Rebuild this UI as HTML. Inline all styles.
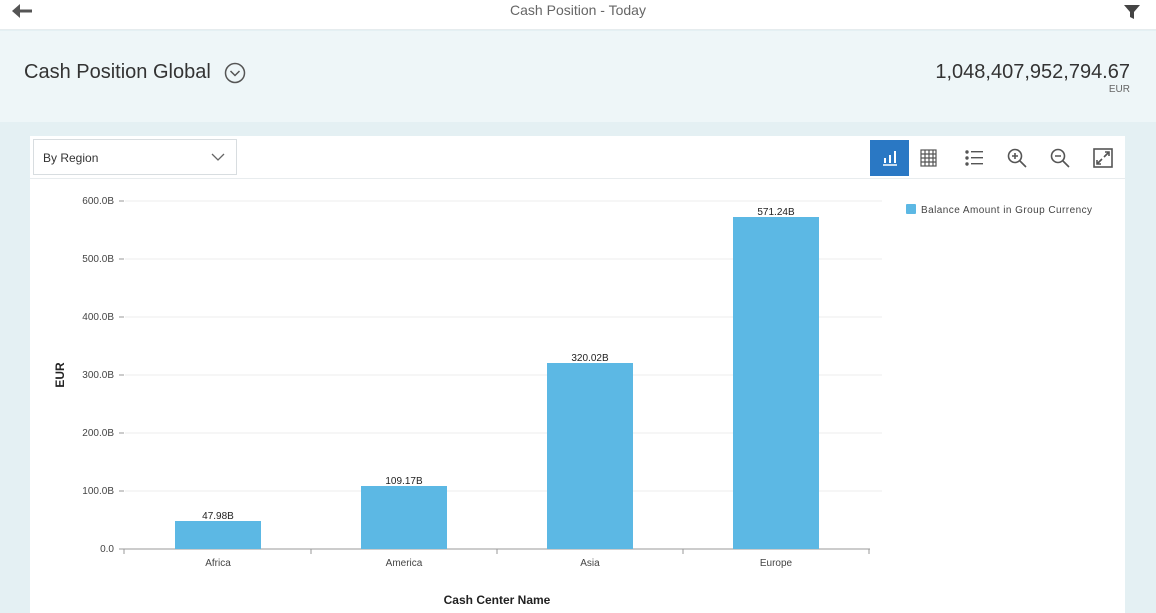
<!DOCTYPE html><html><head><style>
*{margin:0;padding:0;box-sizing:border-box}
body{width:1156px;height:613px;overflow:hidden;font-family:"Liberation Sans",sans-serif;background:#e4f0f3;position:relative}
.a{position:absolute}
</style></head><body>
<div class="a" style="left:0;top:0;width:1156px;height:30px;background:#fff;border-bottom:1px solid #e6ecee"></div>
<svg class="a" style="left:11px;top:3px" width="24" height="16"><path d="M4 8H21" stroke="#555" stroke-width="3" fill="none"/><path d="M1 8L9 1V15Z" fill="#555"/></svg>
<div class="a" style="left:0;width:1156px;top:2px;text-align:center;font-size:14px;color:#666">Cash Position - Today</div>
<svg class="a" style="left:1123px;top:4px" width="18" height="16"><path d="M1 1H17L11 8V15L7 13V8Z" fill="#444"/></svg>
<div class="a" style="left:0;top:31px;width:1156px;height:91px;background:#eef6f8"></div>
<div class="a" style="left:24px;top:61px;font-size:20px;color:#333">Cash Position Global</div>
<svg class="a" style="left:224px;top:62px" width="22" height="22"><circle cx="11" cy="11" r="9.5" stroke="#555" stroke-width="1.5" fill="none"/><path d="M6.5 9L11 13.5L15.5 9" stroke="#555" stroke-width="1.5" fill="none"/></svg>
<div class="a" style="right:26px;top:61px;font-size:20px;color:#333">1,048,407,952,794.67</div>
<div class="a" style="right:26px;top:84px;font-size:10px;color:#666">EUR</div>
<div class="a" style="left:30px;top:136px;width:1095px;height:477px;background:#fff"></div>
<div class="a" style="left:33px;top:139px;width:204px;height:36px;border:1px solid #d8dde0;background:#fff"></div>
<div class="a" style="left:43px;top:151px;font-size:12px;color:#333">By Region</div>
<svg class="a" style="left:210px;top:152px" width="16" height="10"><path d="M2 2L8 8L14 2" stroke="#666" stroke-width="1.3" fill="none"/></svg>
<div class="a" style="left:30px;top:178px;width:1095px;height:1px;background:#e8ecee"></div>
<div class="a" style="left:870px;top:140px;width:39px;height:36px;background:#2a78c4"></div>
<svg class="a" style="left:880px;top:148px" width="20" height="20"><path d="M3 17H17" stroke="#fff" stroke-width="1.5"/><rect x="4" y="10" width="2" height="5" fill="#fff"/><rect x="9" y="7" width="2" height="8" fill="#fff"/><rect x="14" y="3" width="2" height="12" fill="#fff"/></svg>
<svg class="a" style="left:918px;top:148px" width="20" height="20" stroke="#555" stroke-width="1.2" fill="none"><rect x="3" y="2" width="15" height="16"/><path d="M3 6H18M3 10H18M3 14H18M7 2V18M11 2V18M15 2V18"/></svg>
<svg class="a" style="left:963px;top:148px" width="22" height="20" fill="#555"><circle cx="4" cy="4" r="1.7"/><circle cx="4" cy="10" r="1.7"/><circle cx="4" cy="16" r="1.7"/><rect x="8" y="3" width="12" height="1.4"/><rect x="8" y="9" width="12" height="1.4"/><rect x="8" y="15" width="12" height="1.4"/></svg>
<svg class="a" style="left:1006px;top:147px" width="22" height="22" stroke="#555" stroke-width="1.6" fill="none"><circle cx="9" cy="9" r="6.5"/><path d="M14 14L20 20M6 9H12M9 6V12"/></svg>
<svg class="a" style="left:1049px;top:147px" width="22" height="22" stroke="#555" stroke-width="1.6" fill="none"><circle cx="9" cy="9" r="6.5"/><path d="M14 14L20 20M6 9H12"/></svg>
<svg class="a" style="left:1093px;top:148px" width="20" height="20" stroke="#555" stroke-width="1.6" fill="none"><rect x="1" y="1" width="18" height="18"/><path d="M9 11L4 16M4 12V16H8M11 9L16 4M12 4H16V8"/></svg>
<svg class="a" style="left:0;top:0" width="1156" height="613" font-family="Liberation Sans,sans-serif">
<g stroke="#eee" stroke-width="1"><path d="M125 201H882M125 259H882M125 317H882M125 375H882M125 433H882M125 491H882"/></g>
<g font-size="10" fill="#444" text-anchor="end"><text x="114" y="204">600.0B</text><text x="114" y="262">500.0B</text><text x="114" y="320">400.0B</text><text x="114" y="378">300.0B</text><text x="114" y="436">200.0B</text><text x="114" y="494">100.0B</text><text x="114" y="552">0.0</text></g>
<g stroke="#999"><path d="M119 201H124M119 259H124M119 317H124M119 375H124M119 433H124M119 491H124M119 549H124"/><path d="M124 549H870M311 549V554M497 549V554M683 549V554M869 549V554M124 549V554"/></g>
<g fill="#5cb8e4"><rect x="175" y="521" width="86" height="28"/><rect x="361" y="486" width="86" height="63"/><rect x="547" y="363" width="86" height="186"/><rect x="733" y="217" width="86" height="332"/></g>
<g font-size="10" fill="#222" text-anchor="middle"><text x="218" y="519">47.98B</text><text x="404" y="484">109.17B</text><text x="590" y="361">320.02B</text><text x="776" y="215">571.24B</text></g>
<g font-size="10" fill="#444" text-anchor="middle"><text x="218" y="566">Africa</text><text x="404" y="566">America</text><text x="590" y="566">Asia</text><text x="776" y="566">Europe</text></g>
<text x="497" y="604" font-size="12" font-weight="bold" fill="#222" text-anchor="middle">Cash Center Name</text>
<text transform="translate(64 375) rotate(-90)" font-size="12" font-weight="bold" fill="#222" text-anchor="middle">EUR</text>
<rect x="906" y="204" width="10" height="10" rx="1" fill="#5cb8e4"/>
<text x="921" y="213" font-size="10" fill="#444" textLength="171">Balance Amount in Group Currency</text>
</svg>
</body></html>
